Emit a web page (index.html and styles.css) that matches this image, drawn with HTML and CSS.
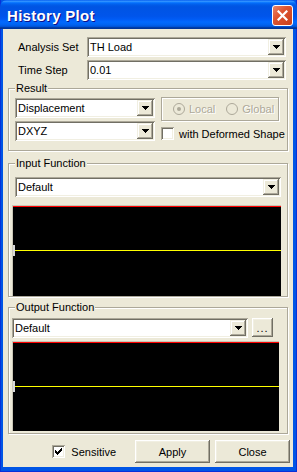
FILE: index.html
```html
<!DOCTYPE html>
<html lang="en">
<head>
    <meta charset="UTF-8">
    <title>History Plot</title>
    <link rel="stylesheet" href="styles.css">
</head>
<body>
    <div class="window">
        <!-- Title bar -->
        <div class="titlebar">
            <span class="title">History Plot</span>
            <button class="close-btn" aria-label="Close">
                <svg width="11" height="11" viewBox="0 0 11 11"><path d="M1.5 1.5l8 8M9.5 1.5l-8 8" stroke="#fff" stroke-width="2.2" stroke-linecap="square"/></svg>
            </button>
        </div>

        <div class="client">
            <!-- Analysis set / time step -->
            <div class="field-row first">
                <span class="field-label">Analysis Set</span>
                <div class="combo wide">
                    <span class="combo-text">TH Load</span>
                    <span class="combo-arrow"><svg width="7" height="4" viewBox="0 0 7 4"><path d="M0 0h7v1h-1v1h-1v1h-1v1h-1v-1h-1v-1h-1v-1h-1z"/></svg></span>
                </div>
            </div>
            <div class="field-row">
                <span class="field-label">Time Step</span>
                <div class="combo wide">
                    <span class="combo-text">0.01</span>
                    <span class="combo-arrow"><svg width="7" height="4" viewBox="0 0 7 4"><path d="M0 0h7v1h-1v1h-1v1h-1v1h-1v-1h-1v-1h-1v-1h-1z"/></svg></span>
                </div>
            </div>

            <!-- Result -->
            <fieldset class="group result">
                <legend>Result</legend>
                <div class="result-body">
                    <div class="result-left">
                        <div class="combo">
                            <span class="combo-text">Displacement</span>
                            <span class="combo-arrow"><svg width="7" height="4" viewBox="0 0 7 4"><path d="M0 0h7v1h-1v1h-1v1h-1v1h-1v-1h-1v-1h-1v-1h-1z"/></svg></span>
                        </div>
                        <div class="combo">
                            <span class="combo-text">DXYZ</span>
                            <span class="combo-arrow"><svg width="7" height="4" viewBox="0 0 7 4"><path d="M0 0h7v1h-1v1h-1v1h-1v1h-1v-1h-1v-1h-1v-1h-1z"/></svg></span>
                        </div>
                    </div>
                    <div class="result-right">
                        <div class="radio-box">
                            <span class="radio disabled">
                                <svg width="12" height="12" viewBox="0 0 12 12"><circle cx="6" cy="6" r="5.5" fill="#ece9d8" stroke="#aca899"/><circle cx="6" cy="6" r="2" fill="#aca899"/></svg>
                                Local
                            </span>
                            <span class="radio disabled">
                                <svg width="12" height="12" viewBox="0 0 12 12"><circle cx="6" cy="6" r="5.5" fill="#ece9d8" stroke="#aca899"/></svg>
                                Global
                            </span>
                        </div>
                        <div class="check-row deformed">
                            <span class="checkbox"></span>
                            <span>with Deformed Shape</span>
                        </div>
                    </div>
                </div>
            </fieldset>

            <!-- Input function -->
            <fieldset class="group input-fn">
                <legend>Input Function</legend>
                <div class="combo">
                    <span class="combo-text">Default</span>
                    <span class="combo-arrow"><svg width="7" height="4" viewBox="0 0 7 4"><path d="M0 0h7v1h-1v1h-1v1h-1v1h-1v-1h-1v-1h-1v-1h-1z"/></svg></span>
                </div>
                <div class="plot input-plot">
                    <span class="tick"></span>
                    <span class="trace"></span>
                </div>
            </fieldset>

            <!-- Output function -->
            <fieldset class="group output-fn">
                <legend>Output Function</legend>
                <div class="output-row">
                    <div class="combo">
                        <span class="combo-text">Default</span>
                        <span class="combo-arrow"><svg width="7" height="4" viewBox="0 0 7 4"><path d="M0 0h7v1h-1v1h-1v1h-1v1h-1v-1h-1v-1h-1v-1h-1z"/></svg></span>
                    </div>
                    <button class="btn dots">...</button>
                </div>
                <div class="plot output-plot">
                    <span class="tick"></span>
                    <span class="trace"></span>
                </div>
            </fieldset>

            <!-- Footer -->
            <div class="footer">
                <div class="check-row sensitive">
                    <span class="checkbox checked">
                        <svg width="7" height="7" viewBox="0 0 7 7"><path d="M0 2h1v1h1v1h1v-1h1v-1h1v-1h1v-1h1v3h-1v1h-1v1h-1v1h-1v1h-1v-1h-1v-1h-1z"/></svg>
                    </span>
                    <span>Sensitive</span>
                </div>
                <button class="btn">Apply</button>
                <button class="btn">Close</button>
            </div>
        </div>
    </div>
</body>
</html>
```

FILE: styles.css
```css
* {
    margin: 0;
    padding: 0;
    box-sizing: border-box;
}

body {
    font-family: 'Liberation Sans', Arial, sans-serif;
    font-size: 11px;
    color: #000;
    overflow: hidden;
}

/* Window frame */
.window {
    width: 297px;
    height: 472px;
    display: flex;
    flex-direction: column;
    background: #0055e5;
    box-shadow: inset 1px 0 #0831d9, inset -1px 0 #0831d9, inset 0 -1px #0831d9;
}

.titlebar {
    height: 29px;
    display: flex;
    align-items: center;
    justify-content: space-between;
    padding: 0 4px 0 7px;
    border-radius: 7px 7px 0 0;
    background: linear-gradient(to bottom, #0058ee 0%, #3593ff 4%, #288eff 6%, #127dff 8%, #036ffc 10%, #0262ee 14%, #0057e5 20%, #0054e3 24%, #0055eb 56%, #005bf5 66%, #026afe 76%, #0062ef 86%, #0052d6 92%, #0040ab 94%, #003092 100%);
}

.title {
    font-size: 15px;
    font-weight: bold;
    letter-spacing: 0.3px;
    color: #fff;
    text-shadow: 1px 1px #0f1089;
    padding-top: 1px;
}

.close-btn {
    width: 21px;
    height: 21px;
    border: 1px solid #fff;
    border-radius: 3px;
    background: linear-gradient(135deg, #e9866a 0%, #dd5431 40%, #c9401c 100%);
    display: flex;
    justify-content: center;
    align-items: center;
    margin-top: 1px;
}

.client {
    flex: 1;
    margin: 0 4px 5px 3px;
    padding: 0 5px;
    background: #ece9d8;
    display: flex;
    flex-direction: column;
}

/* Label + combo rows */
.field-row {
    display: flex;
    align-items: center;
    margin-top: 3px;
    padding-left: 10px;
}

.field-row.first {
    margin-top: 8px;
}

.field-label {
    width: 69px;
}

/* Combo box */
.combo {
    display: flex;
    height: 20px;
    padding: 2px;
    background: #fff;
    box-shadow: inset 1px 1px #aca899, inset -1px -1px #fff, inset 2px 2px #716f64, inset -2px -2px #f1efe2;
}

.combo.wide {
    width: 199px;
}

.combo-text {
    flex: 1;
    line-height: 16px;
    padding-left: 1px;
    white-space: nowrap;
    overflow: hidden;
}

.combo-arrow {
    width: 16px;
    height: 16px;
    display: flex;
    justify-content: center;
    align-items: center;
    background: #ece9d8;
    box-shadow: inset -1px -1px #716f64, inset 1px 1px #f1efe2, inset -2px -2px #aca899, inset 2px 2px #fff;
}

.combo-arrow svg {
    shape-rendering: crispEdges;
}

/* Group boxes */
.group {
    border: 1px solid #aca899;
    box-shadow: inset 1px 1px #fff, 1px 1px #fff;
    padding: 0 6px;
    min-width: 0;
}

.group legend {
    padding: 0 1px;
    line-height: 13px;
    background: #ece9d8;
}

.result {
    margin-top: 2px;
    padding-top: 3px;
    padding-bottom: 9px;
}

.result-body {
    display: flex;
    gap: 6px;
}

.result-left {
    width: 140px;
    flex-shrink: 0;
    display: flex;
    flex-direction: column;
    gap: 3px;
}

.result-right {
    flex: 1;
    min-width: 0;
    display: flex;
    flex-direction: column;
}

.radio-box {
    height: 24px;
    margin-top: -1px;
    margin-right: 2px;
    display: flex;
    align-items: center;
    gap: 11px;
    padding-left: 11px;
    border: 1px solid #aca899;
    box-shadow: inset 1px 1px #fff, 1px 1px #fff;
}

.radio {
    display: flex;
    align-items: center;
    gap: 4px;
}

.disabled {
    color: #aca899;
    text-shadow: 1px 1px #fff;
}

.check-row {
    display: flex;
    align-items: center;
    gap: 6px;
    white-space: nowrap;
}

.deformed {
    margin-top: 6px;
    gap: 5px;
}

.checkbox {
    width: 13px;
    height: 13px;
    flex-shrink: 0;
    display: flex;
    justify-content: center;
    align-items: center;
    background: #fff;
    box-shadow: inset 1px 1px #aca899, inset -1px -1px #fff, inset 2px 2px #716f64, inset -2px -2px #f1efe2;
}

.checkbox svg {
    shape-rendering: crispEdges;
}

/* Function plots */
.input-fn {
    margin-top: 6px;
    padding-top: 7px;
    padding-bottom: 0;
}

.output-fn {
    margin-top: 4px;
    padding-top: 4px;
    padding-bottom: 2px;
}

.plot {
    display: flex;
    align-items: flex-start;
    border-top: 1px solid #c8c5b4;
    border-left: 1px solid #c8c5b4;
    background: linear-gradient(#ff0000 0 1px, #000 1px);
}

.input-plot {
    height: 91px;
    margin: 8px 0 0 -3px;
}

.output-plot {
    height: 90px;
    margin: 3px 2px 0 -3px;
}

.tick {
    width: 2px;
    height: 11px;
    margin-top: 39px;
    background: #d8d8d8;
}

.trace {
    flex: 1;
    height: 1px;
    margin-top: 44px;
    background: #ffff00;
}

.output-row {
    display: flex;
    align-items: flex-start;
    gap: 4px;
    margin-left: -3px;
}

.output-row .combo {
    width: 236px;
}

/* Buttons */
.btn {
    font-family: inherit;
    font-size: 11px;
    color: #000;
    width: 75px;
    height: 23px;
    border: none;
    background: #ece9d8;
    box-shadow: inset -1px -1px #716f64, inset 1px 1px #fff, inset -2px -2px #aca899, inset 2px 2px #f1efe2;
}

.btn.dots {
    width: 21px;
    height: 19px;
    line-height: 12px;
    letter-spacing: 1px;
}

.footer {
    display: flex;
    justify-content: flex-end;
    align-items: center;
    gap: 5px;
    margin: 6px -2px 0 0;
}

.sensitive {
    margin-right: 14px;
}
```
